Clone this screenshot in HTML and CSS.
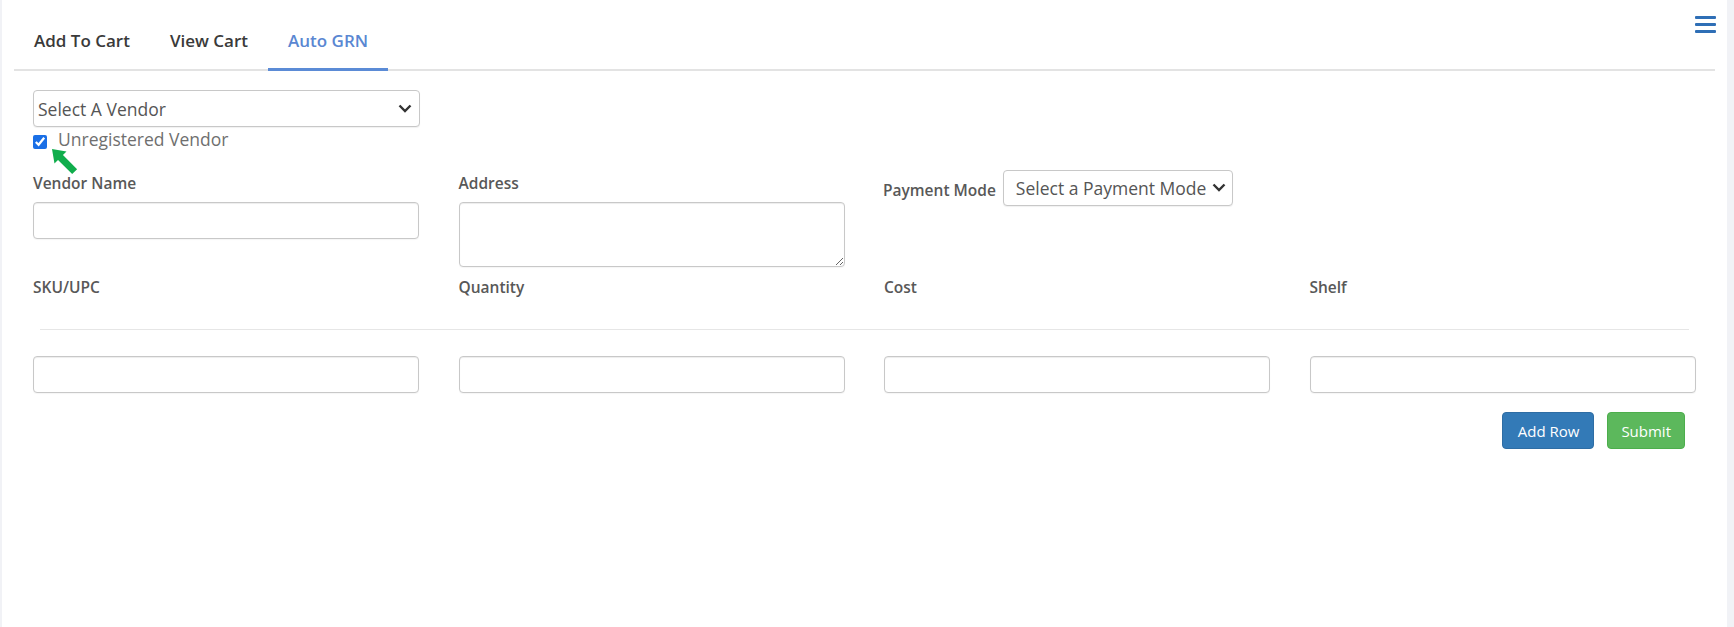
FILE: index.html
```html
<!DOCTYPE html>
<html lang="en">
<head>
<meta charset="utf-8">
<title>Auto GRN</title>
<link rel="stylesheet" href="styles.css">
</head>
<body>
<div class="page">
  <header class="topbar">
    <nav class="tabs">
      <a class="tab">Add To Cart</a>
      <a class="tab">View Cart</a>
      <a class="tab active">Auto GRN</a>
    </nav>
    <button class="menu" aria-label="Menu">
      <svg width="21" height="17" viewBox="0 0 21 17"><rect x="0" y="0" width="21" height="3" rx="1" fill="#2f6fb6"/><rect x="0" y="7" width="21" height="3" rx="1" fill="#2f6fb6"/><rect x="0" y="14" width="21" height="3" rx="1" fill="#2f6fb6"/></svg>
    </button>
  </header>

  <main class="form">
    <div class="select-wrap vendor-select">
      <select class="control select">
        <option>Select A Vendor</option>
      </select>
      <svg class="chev" width="14" height="9" viewBox="0 0 14 9"><path d="M1.5 1.5 L7 7 L12.5 1.5" fill="none" stroke="#333" stroke-width="2.4"/></svg>
    </div>

    <div class="check-row">
      <input type="checkbox" class="check" checked>
      <span class="check-label">Unregistered Vendor</span>
      <svg class="arrow" width="44" height="44" viewBox="0 0 44 44"><g transform="translate(12 12) rotate(45)"><polygon points="0,0 12,-8.5 12,-3.5 32,-3.5 32,3.5 12,3.5 12,8.5" fill="#10ad4c"/></g></svg>
    </div>

    <div class="grid fields">
      <div class="field">
        <label class="label">Vendor Name</label>
        <input class="control" type="text">
      </div>
      <div class="field">
        <label class="label">Address</label>
        <textarea class="control area"></textarea>
      </div>
      <div class="field inline">
        <label class="label inline-label">Payment Mode</label>
        <div class="select-wrap pay-select">
          <select class="control select small">
            <option>Select a Payment Mode</option>
          </select>
          <svg class="chev" width="14" height="9" viewBox="0 0 14 9"><path d="M1.5 1.5 L7 7 L12.5 1.5" fill="none" stroke="#333" stroke-width="2.4"/></svg>
        </div>
      </div>
    </div>

    <div class="grid heads">
      <div class="label">SKU/UPC</div>
      <div class="label">Quantity</div>
      <div class="label">Cost</div>
      <div class="label">Shelf</div>
    </div>

    <hr class="rule">

    <div class="grid items">
      <input class="control" type="text">
      <input class="control" type="text">
      <input class="control" type="text">
      <input class="control" type="text">
    </div>

    <div class="actions">
      <button class="btn btn-blue">Add Row</button>
      <button class="btn btn-green">Submit</button>
    </div>
  </main>
</div>
</body>
</html>
```

FILE: styles.css
```css
* { box-sizing: border-box; }

html, body {
  margin: 0;
  padding: 0;
}

body {
  background: #f1f2f6;
  padding: 0 7px 0 2px;
  font-family: "Open Sans", "Liberation Sans", sans-serif;
  color: #555;
}

.page {
  background: #fff;
  min-height: 627px;
}

.topbar {
  display: flex;
  justify-content: space-between;
  align-items: flex-start;
  margin: 0 12px;
  border-bottom: 2px solid #e3e3e3;
}

.tabs {
  display: flex;
}

.tab {
  display: block;
  padding: 30px 20px 16px;
  margin-bottom: -2px;
  border-bottom: 3px solid transparent;
  font-size: 17px;
  font-weight: 600;
  line-height: 22px;
  color: #3a3a3a;
  cursor: pointer;
}

.tab.active {
  color: #5a87d2;
  border-bottom-color: #5b8bd6;
}

.menu {
  border: 0;
  background: none;
  padding: 0;
  margin: 16px -1px 0 0;
  width: 21px;
  height: 17px;
  display: block;
}
.menu svg { display: block; }

.form {
  padding: 19px 30px 0 31px;
}

.control {
  display: block;
  width: 100%;
  height: 37px;
  border: 1px solid #c8c8c8;
  border-radius: 4px;
  box-shadow: inset 0 1px 1px rgba(0,0,0,0.075), 0 1px 1px rgba(0,0,0,0.04);
  background: #fff;
  font-family: "Open Sans", "Liberation Sans", sans-serif;
  font-size: 17.5px;
  color: #555;
  padding: 0 4px;
  margin: 0;
}

.select-wrap {
  position: relative;
}

.vendor-select {
  width: 387px;
}

.select {
  appearance: none;
  -webkit-appearance: none;
  padding: 0 30px 0 4px;
  box-shadow: 0 1px 1px rgba(0,0,0,0.06);
}

.chev {
  position: absolute;
  right: 8px;
  top: 14px;
  pointer-events: none;
}

.check-row {
  position: relative;
  display: flex;
  align-items: center;
  height: 22px;
  margin-top: 3px;
  margin-bottom: 1px;
}

.check {
  width: 14px;
  height: 14px;
  margin: 2px 11px 0 0;
  accent-color: #1a6fe6;
}

.check-label {
  font-size: 17.5px;
  line-height: 22px;
  color: #6f6f6f;
  margin-top: -4px;
}

.arrow {
  position: absolute;
  left: 7px;
  top: 7px;
}

.grid {
  display: grid;
  grid-template-columns: repeat(4, 386px);
  column-gap: 39.5px;
}

.fields {
  margin-top: 20px;
}

.label {
  display: block;
  font-size: 15.5px;
  font-weight: 600;
  line-height: 22px;
  color: #585858;
  margin-bottom: 8px;
}

.area {
  height: 65px;
  resize: vertical;
  padding: 4px;
}

.field.inline {
  display: flex;
  align-items: center;
  align-self: start;
  margin-left: -1px;
  margin-top: -2px;
}

.inline-label {
  margin: 4px 7px 0 0;
  white-space: nowrap;
}

.pay-select {
  width: 230px;
}

.small {
  height: 36px;
  padding: 0 26px 0 12px;
}

.pay-select .chev {
  right: 7px;
  top: 13px;
}

.heads {
  margin-top: 9px;
}

.heads .label {
  margin-bottom: 0;
}

.rule {
  border: 0;
  border-top: 1px solid #e6e6e6;
  height: 0;
  margin: 31px 8px 0 7px;
}

.items {
  margin-top: 26px;
}

.actions {
  display: flex;
  justify-content: flex-end;
  gap: 13px;
  margin: 19px 12px 0 0;
}

.btn {
  height: 37px;
  padding: 0 14px;
  border-radius: 4px;
  font-family: "Open Sans", "Liberation Sans", sans-serif;
  font-size: 15px;
  color: #fff;
  cursor: pointer;
}

.btn-blue {
  background: #337ab7;
  border: 1px solid #2e6da4;
  padding: 0 14px 0 15px;
}

.btn-green {
  background: #5cb85c;
  border: 1px solid #4cae4c;
  padding: 0 13px;
}
```
